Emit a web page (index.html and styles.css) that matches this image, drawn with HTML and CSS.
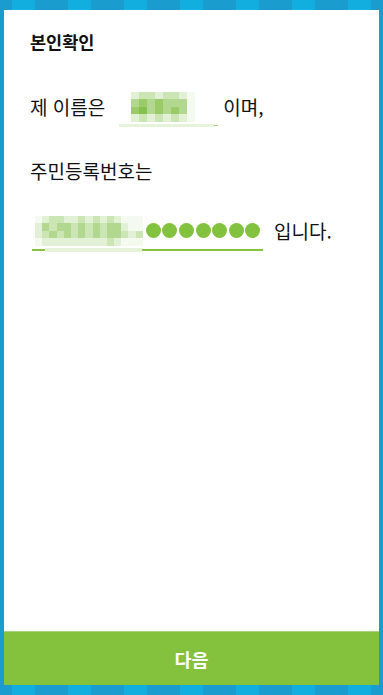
FILE: index.html
```html
<!DOCTYPE html>
<html lang="ko">
<head>
    <meta charset="UTF-8">
    <meta name="viewport" content="width=device-width, initial-scale=1.0">
    <title>본인확인</title>
    <link rel="stylesheet" href="styles.css">
</head>
<body>
    <div class="card">
        <div class="content">
            <h2 class="title">본인확인</h2>

            <!-- 이름 -->
            <div class="row row-name">
                <span>제 이름은</span>
                <div class="name-field">
                    <div class="mosaic mosaic-name">
                        <i class="g1"></i><i class="g2"></i><i class="g2"></i><i class="g1"></i><i class="g2"></i><i class="g2"></i><i class="g1"></i><i class="g0"></i>
                        <i class="g3"></i><i class="g4"></i><i class="g3"></i><i class="g4"></i><i class="g3"></i><i class="g3"></i><i class="g3"></i><i class="g0"></i>
                        <i class="g4"></i><i class="g5"></i><i class="g3"></i><i class="g4"></i><i class="g3"></i><i class="g4"></i><i class="g3"></i><i class="g0"></i>
                        <i class="g1"></i><i class="g2"></i><i class="g1"></i><i class="g2"></i><i class="g1"></i><i class="g2"></i><i class="g1"></i><i class="g0"></i>
                    </div>
                    <div class="name-line"></div>
                </div>
                <span class="after-name">이며,</span>
            </div>

            <div class="row row-label">
                <span>주민등록번호는</span>
            </div>

            <!-- 주민등록번호 -->
            <div class="row row-rrn">
                <div class="rrn-field">
                    <div class="mosaic mosaic-rrn">
                        <i class="g0"></i><i class="g1"></i><i class="g2"></i><i class="g2"></i><i class="g1"></i><i class="g1"></i><i class="g2"></i><i class="g1"></i><i class="g2"></i><i class="g1"></i><i class="g2"></i><i class="g1"></i><i class="g0"></i><i class="g0"></i><i class="g0"></i>
                        <i class="g1"></i><i class="g3"></i><i class="g2"></i><i class="g3"></i><i class="g3"></i><i class="g2"></i><i class="g3"></i><i class="g2"></i><i class="g3"></i><i class="g2"></i><i class="g3"></i><i class="g3"></i><i class="g1"></i><i class="g0"></i><i class="g0"></i>
                        <i class="g1"></i><i class="g2"></i><i class="g3"></i><i class="g2"></i><i class="g3"></i><i class="g2"></i><i class="g3"></i><i class="g2"></i><i class="g3"></i><i class="g2"></i><i class="g3"></i><i class="g3"></i><i class="g2"></i><i class="g1"></i><i class="g2"></i>
                        <i class="g0"></i><i class="g1"></i><i class="g1"></i><i class="g1"></i><i class="g1"></i><i class="g1"></i><i class="g1"></i><i class="g1"></i><i class="g1"></i><i class="g1"></i><i class="g2"></i><i class="g1"></i><i class="g0"></i><i class="g0"></i><i class="g0"></i>
                    </div>
                    <div class="dots">
                        <b></b><b></b><b></b><b></b><b></b><b></b><b></b>
                    </div>
                    <div class="rrn-line"></div>
                    <div class="rrn-blur-line"></div>
                </div>
                <span class="after-rrn">입니다.</span>
            </div>
        </div>

        <button class="next-button">다음</button>
    </div>
</body>
</html>
```

FILE: styles.css
```css
body {
    margin: 0;
    height: 695px;
    overflow: hidden;
    font-family: "Noto Sans CJK KR", "Noto Sans", sans-serif;
    background-color: #1a9dd0;
    background-image: repeating-linear-gradient(90deg, #13aee0 0 23px, #1a9ccf 23px 56px);
    background-position: 12px 0;
}
.card {
    margin: 10px 4px;
    height: 675px;
    background: #fff;
    display: flex;
    flex-direction: column;
}
.content {
    flex: 1;
    padding: 0 26px;
}
.title {
    margin: 0;
    height: 64px;
    line-height: 64px;
    font-size: 17.5px;
    font-weight: 700;
    color: #111;
}
.row {
    display: flex;
    align-items: center;
    font-size: 19px;
    color: #111;
}
.row-name,
.row-label {
    height: 64px;
}
.row-rrn {
    height: 56px;
}

/* blurred input values */
.mosaic {
    display: grid;
    grid-auto-rows: 7.5px;
}
.mosaic i {
    display: block;
}
.mosaic-name {
    grid-template-columns: repeat(8, 8px);
}
.mosaic-rrn {
    grid-template-columns: repeat(15, 7.2px);
}
.g0 { background: #f4faef; }
.g1 { background: #e2f0d5; }
.g2 { background: #cce5b5; }
.g3 { background: #b2d78e; }
.g4 { background: #9acb68; }
.g5 { background: #86c04e; }

.name-field {
    margin-left: 14px;
    margin-top: 6px;
    width: 100px;
    display: flex;
    flex-direction: column;
    padding-left: 12px;
    box-sizing: border-box;
}
.name-line {
    position: relative;
    margin: 2px 0 0 -12px;
    width: 96px;
    height: 3px;
    background: #e6f2da;
}
.name-line::after {
    content: "";
    position: absolute;
    right: -3px;
    top: 1px;
    width: 4px;
    height: 1.5px;
    background: #a8d27e;
}
.after-name {
    margin-left: 4px;
}

.rrn-field {
    position: relative;
    margin-left: 2px;
    width: 231px;
    box-sizing: border-box;
    display: flex;
    align-items: center;
    padding: 0 3px 5px 3px;
    margin-top: 6px;
}
.dots {
    display: flex;
    gap: 1.6px;
    margin-left: 3px;
}
.dots b {
    width: 15px;
    height: 15px;
    border-radius: 50%;
    background: #82c23e;
}
.rrn-line {
    position: absolute;
    left: 0;
    right: 0;
    bottom: 0;
    height: 2px;
    background: #86c440;
}
.rrn-blur-line {
    position: absolute;
    left: 13px;
    width: 97px;
    bottom: -1px;
    height: 4px;
    background: #e6f2da;
}
.after-rrn {
    margin-left: 11px;
}

.next-button {
    height: 54px;
    border: none;
    border-top: 1px solid #a9d47f;
    background: #84c13d;
    color: #fff;
    font-family: inherit;
    font-size: 18.5px;
    font-weight: 700;
    cursor: pointer;
}
```
